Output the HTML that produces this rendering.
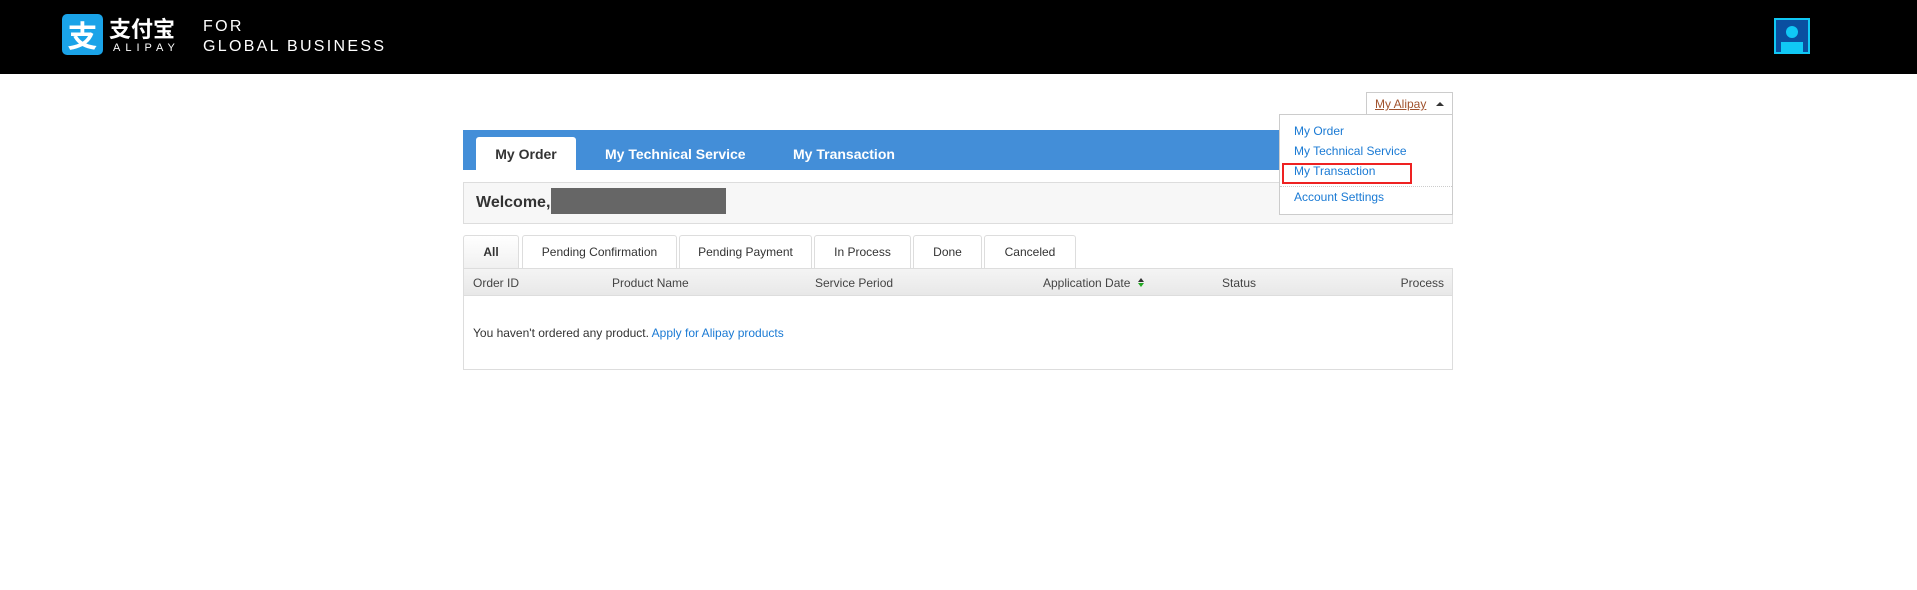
<!DOCTYPE html>
<html><head><meta charset="utf-8">
<style>
*{margin:0;padding:0;box-sizing:border-box}
body{width:1917px;height:590px;background:#fff;font-family:"Liberation Sans",Arial,sans-serif;position:relative;overflow:hidden;color:#333}
.hd{position:absolute;left:0;top:0;width:1917px;height:74px;background:#000}
.logo{position:absolute;left:62px;top:14px;width:41px;height:41px;background:#1aa3e8;border-radius:5px;color:#fff;font:bold 30px "Noto Sans CJK SC",sans-serif;text-align:center;line-height:40px}
.cn{position:absolute;left:109px;top:14px;color:#fff;font:bold 22px "Noto Sans CJK SC",sans-serif;letter-spacing:0px;line-height:28px}
.ali{position:absolute;left:113px;top:43px;color:#fff;font-size:11px;letter-spacing:5px;line-height:11px}
.fgb{position:absolute;left:203px;top:17px;color:#fff;font-size:16px;letter-spacing:2.3px;line-height:20px}
.av{position:absolute;left:1774px;top:18px;width:36px;height:36px;border:2px solid #10c8f5;background:#0a4fa0}
.av i{position:absolute;left:10px;top:6px;width:12px;height:12px;border-radius:50%;background:#10c8f5}
.av b{position:absolute;left:5px;top:22px;width:22px;height:10px;background:#10c8f5}
.a{position:absolute}
.blue{left:463px;top:130px;width:990px;height:40px;background:#438ed8}
.t{position:absolute;top:146px;color:#fff;font-weight:bold;font-size:14px}
.tact{left:476px;top:137px;width:100px;height:33px;background:#fff;border-radius:3px 3px 0 0;color:#333;font-weight:bold;font-size:14px;text-align:center;line-height:34px}
.wel{left:463px;top:182px;width:990px;height:42px;background:#f7f7f7;border:1px solid #ddd}
.wel span{position:absolute;left:12px;top:11px;font-weight:bold;font-size:16px;color:#333}
.gray{left:551px;top:188px;width:175px;height:26px;background:#666}
.ft{position:absolute;top:235px;height:34px;border:1px solid #ddd;border-bottom:none;background:#fff;border-radius:3px 3px 0 0;font-size:12px;color:#333;text-align:center;line-height:32px}
.tbl{left:463px;top:268px;width:990px;height:102px;border:1px solid #ddd}
.th{position:absolute;left:0;top:0;width:988px;height:27px;background:linear-gradient(#f4f4f4,#e8e8e8);border-bottom:1px solid #ddd}
.th span{position:absolute;top:7px;font-size:12px;color:#444}
.dd{left:1279px;top:114px;width:174px;height:101px;border:1px solid #ccc;background:#fff}
.dd span{position:absolute;left:14px;font-size:12px;color:#1a7ad4}
.ma{left:1366px;top:92px;width:87px;height:23px;border:1px solid #ccc;border-bottom:none;background:#fff}
</style></head><body>
<div class="hd">
<div class="logo">支</div>
<div class="cn">支付宝</div>
<div class="ali">ALIPAY</div>
<div class="fgb">FOR<br>GLOBAL BUSINESS</div>
<div class="av"><i></i><b></b></div>
</div>
<div class="a blue"></div>
<div class="a tact">My Order</div>
<div class="t" style="left:605px">My Technical Service</div>
<div class="t" style="left:793px">My Transaction</div>
<div class="a wel"><span>Welcome,</span></div>
<div class="a gray"></div>
<div class="ft" style="left:463px;width:56px;background:linear-gradient(#fff,#f0f0f0);font-weight:bold">All</div>
<div class="ft" style="left:522px;width:155px">Pending Confirmation</div>
<div class="ft" style="left:679px;width:133px">Pending Payment</div>
<div class="ft" style="left:814px;width:97px">In Process</div>
<div class="ft" style="left:913px;width:69px">Done</div>
<div class="ft" style="left:984px;width:92px">Canceled</div>
<div class="a tbl">
<div class="th">
<span style="left:9px">Order ID</span>
<span style="left:148px">Product Name</span>
<span style="left:351px">Service Period</span>
<span style="left:579px">Application Date</span>
<span style="left:674px;top:9px;width:0;height:0;border:3.5px solid transparent;border-bottom:4px solid #333;border-top:none"></span>
<span style="left:674px;top:14px;width:0;height:0;border:3.5px solid transparent;border-top:4px solid #2a2;border-bottom:none"></span>
<span style="left:758px">Status</span>
<span style="right:8px">Process</span>
</div>
<div style="position:absolute;left:9px;top:57px;font-size:12px;color:#333">You haven't ordered any product. <span style="color:#1a7ad4">Apply for Alipay products</span></div>
</div>
<div class="a ma"><span style="position:absolute;left:8px;top:4px;font-size:12px;color:#a0522d;text-decoration:underline">My Alipay</span><span style="position:absolute;left:69px;top:9px;width:0;height:0;border:4px solid transparent;border-bottom:4px solid #333;border-top:none"></span></div>
<div class="a dd">
<span style="top:9px">My Order</span>
<span style="top:29px">My Technical Service</span>
<span style="top:49px">My Transaction</span>
<div style="position:absolute;left:2px;top:48px;width:130px;height:21px;border:2px solid #e22"></div>
<div style="position:absolute;left:0;top:71px;width:172px;border-top:1px dotted #ccc"></div>
<span style="top:75px">Account Settings</span>
</div>
</body></html>
